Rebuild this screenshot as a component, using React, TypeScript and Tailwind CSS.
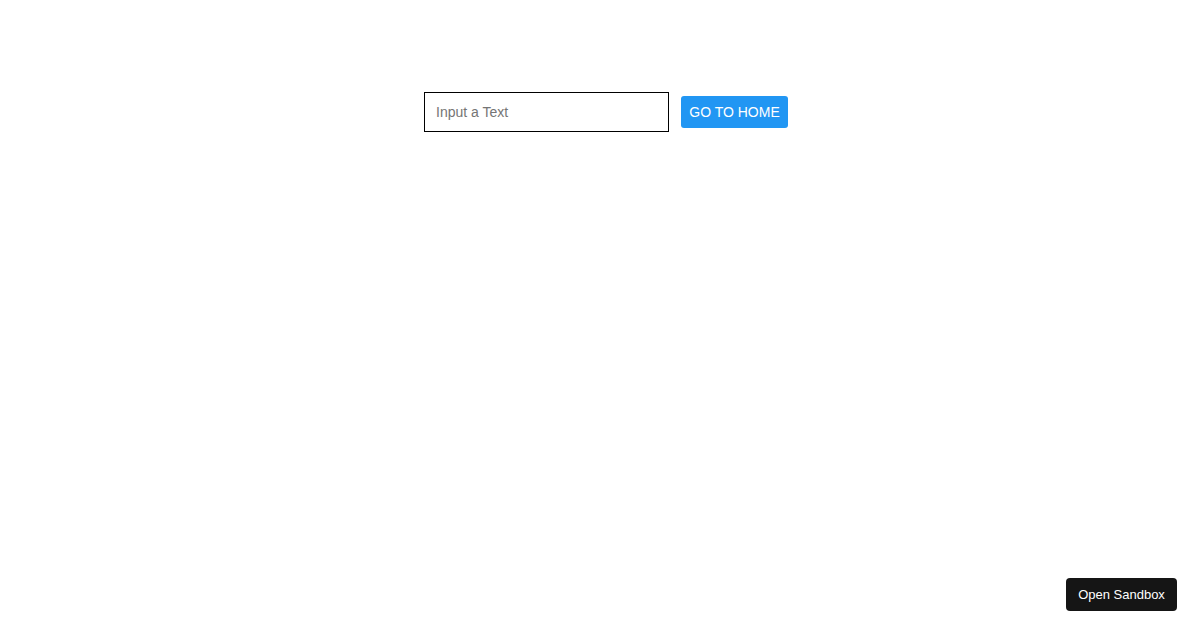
export default function App() {
  return (
    <div className="relative h-[630px] w-full bg-white font-['Liberation_Sans',Arial,sans-serif]">
      <div className="flex items-center justify-center gap-3 pl-3 pt-[92px]">
        <input
          type="text"
          placeholder="Input a Text"
          className="h-10 w-[245px] border border-black px-[11px] text-[14px] text-black outline-none placeholder:text-[#757575]"
        />
        <button className="h-8 w-[107px] rounded-[3px] bg-[#2196f3] text-[14px] text-white">
          GO TO HOME
        </button>
      </div>

      <button className="fixed bottom-[19px] right-[23px] h-[33px] w-[111px] rounded-[4px] bg-[#151515] text-[13px] text-white">
        Open Sandbox
      </button>
    </div>
  );
}
